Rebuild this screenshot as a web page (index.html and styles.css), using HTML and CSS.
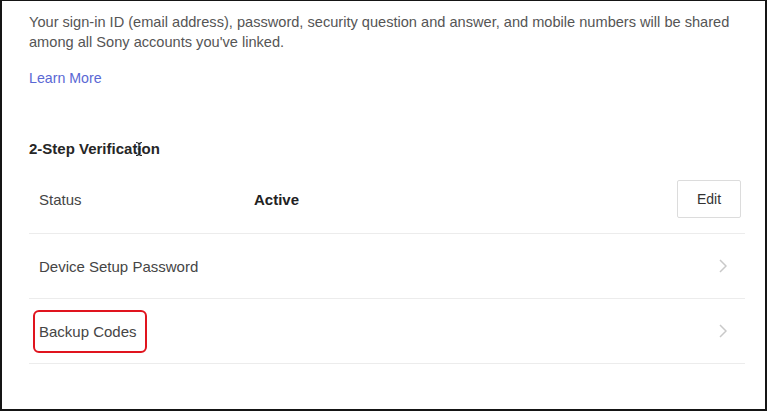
FILE: index.html
```html
<!DOCTYPE html>
<html lang="en">
<head>
<meta charset="utf-8">
<title>2-Step Verification</title>
<link rel="stylesheet" href="styles.css">
</head>
<body>
<div class="frame">
  <div class="content">
    <p class="intro">Your sign-in ID (email address), password, security question and answer, and mobile numbers will be shared among all Sony accounts you've linked.</p>
    <a class="learn" href="#">Learn More</a>
    <h2 class="heading">2-Step Verification<svg class="cursor" width="8" height="16" viewBox="0 0 8 16"><path d="M1 1.5 Q4 1.5 4 3.5 Q4 1.5 7 1.5 M4 3.5 V12.5 M1 14.5 Q4 14.5 4 12.5 Q4 14.5 7 14.5 M2.5 8 H5.5" fill="none" stroke="#222" stroke-width="1.1"/></svg></h2>
    <div class="list">
      <div class="row">
        <span class="label status">Status</span>
        <span class="value">Active</span>
        <button class="edit" type="button">Edit</button>
      </div>
      <div class="row link">
        <span class="label">Device Setup Password</span>
        <svg class="chev" width="8" height="14" viewBox="0 0 8 14"><path d="M1 1 L7 7 L1 13" fill="none" stroke="#c9c9c9" stroke-width="1.5"/></svg>
      </div>
      <div class="row link">
        <span class="label marked">Backup Codes</span>
        <svg class="chev" width="8" height="14" viewBox="0 0 8 14"><path d="M1 1 L7 7 L1 13" fill="none" stroke="#c9c9c9" stroke-width="1.5"/></svg>
      </div>
    </div>
  </div>
</div>
</body>
</html>
```
FILE: styles.css
```css
html, body {
  margin: 0;
  padding: 0;
  background: #fff;
}
body {
  font-family: "Liberation Sans", Arial, Helvetica, sans-serif;
}
.frame {
  box-sizing: border-box;
  width: 767px;
  height: 411px;
  border: 2px solid #151515;
  border-top-width: 1px;
  overflow: hidden;
}
.content {
  width: 716px;
  padding: 11px 0 0 27px;
}
.intro {
  margin: 0;
  font-size: 14.6px;
  line-height: 20px;
  color: #555;
}
.learn {
  display: block;
  margin-top: 16px;
  font-size: 14.2px;
  line-height: 20px;
  color: #5a68d4;
  text-decoration: none;
}
.heading {
  position: relative;
  margin: 51px 0 0;
  font-size: 15px;
  line-height: 20px;
  font-weight: bold;
  color: #262626;
}
.cursor {
  position: absolute;
  left: 106px;
  top: 2px;
}
.list {
  margin-top: 10px;
}
.row {
  display: flex;
  align-items: center;
  height: 64px;
  border-bottom: 1px solid #ececec;
  padding: 0 4px 0 10px;
}
.row:first-child {
  height: 60px;
  padding-bottom: 4px;
}
.row.link {
  padding-right: 18px;
}
.label {
  font-size: 15px;
  color: #454545;
  flex: 1;
}
.label.status {
  flex: 0 0 215px;
}
.value {
  flex: 1;
  font-size: 15px;
  font-weight: bold;
  color: #222;
}
.edit {
  width: 64px;
  height: 38px;
  border: 1px solid #dcdcdc;
  border-radius: 2px;
  background: #fff;
  font-family: inherit;
  font-size: 14px;
  color: #333;
}
.chev {
  flex: none;
}
.marked {
  flex: none;
  position: relative;
  margin-right: auto;
}
.marked::after {
  content: "";
  position: absolute;
  left: -6px;
  right: -10px;
  top: -13px;
  bottom: -13px;
  border: 2px solid #e0141e;
  border-radius: 6px;
}
```
